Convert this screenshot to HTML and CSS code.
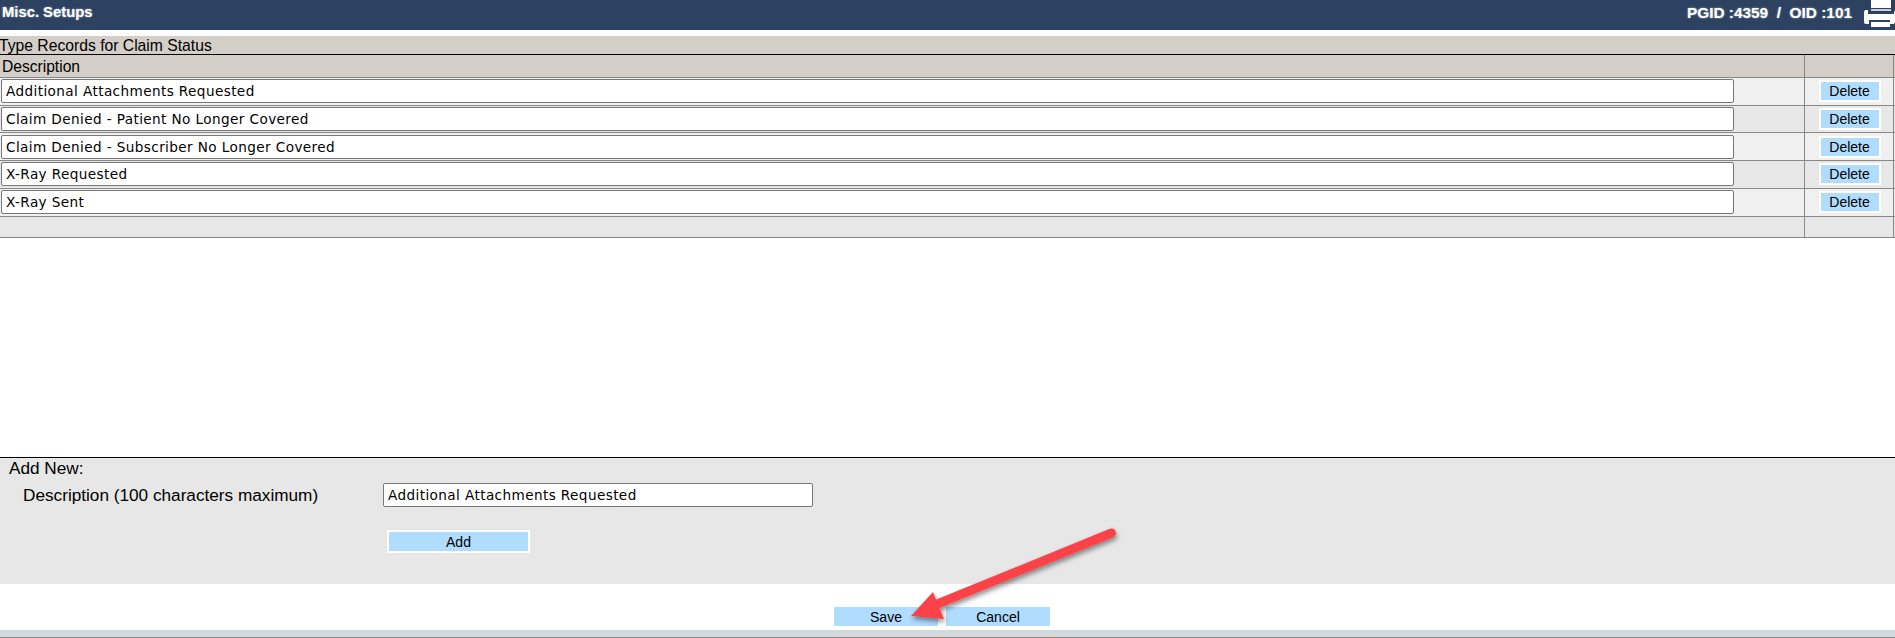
FILE: index.html
```html
<!DOCTYPE html>
<html lang="en">
<head>
    <meta charset="UTF-8">
    <title>Misc. Setups</title>
    <link rel="stylesheet" href="styles.css">
</head>
<body>
    <div class="page">
        <div class="topbar">
            <span class="topbar-title">Misc. Setups</span>
            <div class="topbar-right">
                <span class="topbar-ids">PGID :4359 &nbsp;/&nbsp; OID :101</span>
                <svg class="printer" viewBox="0 0 31 27" width="31" height="27">
                    <path fill="#fff" d="M7 0h20v8H7z"/>
                    <path fill="#fff" d="M2 10h2v4h26V11l1 1v10a2 2 0 0 1-2 2h-3v-4H5v4H2a2 2 0 0 1-2-2V12a2 2 0 0 1 2-2z"/>
                    <path fill="#fff" d="M7 9h20v2H7z" opacity="0.75"/>
                    <path fill="#fff" d="M7 22h19v5H7z"/>
                </svg>
            </div>
        </div>

        <div class="section-title">Type Records for Claim Status</div>

        <div class="records">
            <div class="row row-head">
                <div class="cell-main">Description</div>
                <div class="cell-side"></div>
            </div>
            <div class="row row-odd">
                <div class="cell-main"><input class="text-input" value="Additional Attachments Requested"></div>
                <div class="cell-side"><button class="btn btn-delete">Delete</button></div>
            </div>
            <div class="row row-even row-short">
                <div class="cell-main"><input class="text-input" value="Claim Denied - Patient No Longer Covered"></div>
                <div class="cell-side"><button class="btn btn-delete">Delete</button></div>
            </div>
            <div class="row row-odd row-low">
                <div class="cell-main"><input class="text-input" value="Claim Denied - Subscriber No Longer Covered"></div>
                <div class="cell-side"><button class="btn btn-delete">Delete</button></div>
            </div>
            <div class="row row-even">
                <div class="cell-main"><input class="text-input" value="X-Ray Requested"></div>
                <div class="cell-side"><button class="btn btn-delete">Delete</button></div>
            </div>
            <div class="row row-odd">
                <div class="cell-main"><input class="text-input" value="X-Ray Sent"></div>
                <div class="cell-side"><button class="btn btn-delete">Delete</button></div>
            </div>
            <div class="row row-even row-blank">
                <div class="cell-main"></div>
                <div class="cell-side"></div>
            </div>
        </div>

        <div class="spacer"></div>

        <div class="add-new">
            <div class="add-title">Add New:</div>
            <div class="add-line">
                <label class="add-label">Description (100 characters maximum)</label>
                <input class="text-input add-input" value="Additional Attachments Requested">
            </div>
            <button class="btn btn-add">Add</button>
        </div>

        <div class="actions">
            <button class="btn btn-action">Save</button>
            <button class="btn btn-action">Cancel</button>
        </div>
        <div class="footer"></div>
    </div>

    <!-- annotation arrow drawn over the page -->
    <svg class="arrow" viewBox="0 0 1895 638" width="1895" height="638">
        <defs>
            <filter id="arrowShadow" x="-10%" y="-10%" width="120%" height="130%">
                <feDropShadow dx="1" dy="3" stdDeviation="2.5" flood-color="#000" flood-opacity="0.45"/>
            </filter>
        </defs>
        <g filter="url(#arrowShadow)">
            <path d="M1111.5 533L930 607" stroke="#fb4349" stroke-width="9" stroke-linecap="round" fill="none"/>
            <path fill="#fb4349" d="M911 616L933 592L944 619Z"/>
        </g>
    </svg>
</body>
</html>
```
FILE: styles.css
```css
html, body {
    margin: 0;
    padding: 0;
    background: white;
}
body {
    font-family: "Liberation Sans", Arial, sans-serif;
    overflow: hidden;
}
.page {
    width: 1895px;
    height: 638px;
    display: flex;
    flex-direction: column;
}
.topbar {
    height: 30px;
    background: #2c4260;
    color: white;
    display: flex;
    justify-content: space-between;
    padding-left: 2px;
    flex: none;
    box-sizing: border-box;
    overflow: hidden;
}
.topbar-title,
.topbar-ids {
    font-size: 14.8px;
    font-weight: bold;
    line-height: 25px;
    text-shadow: 0 0 2px rgba(255,255,255,0.6);
}
.topbar-ids {
    font-size: 15.4px;
}
.topbar-right {
    display: flex;
    gap: 12px;
}
.printer {
    display: block;
}
.section-title {
    margin-top: 6px;
    height: 18px;
    background: #d3cec7;
    font-size: 15.7px;
    line-height: 19px;
    text-indent: -1px;
    color: black;
    flex: none;
}
.records {
    border-top: 1px solid black;
    flex: none;
}
.row {
    display: flex;
    border-bottom: 1px solid #888;
    box-sizing: border-box;
    height: 28px;
}
.row-head {
    height: 23px;
    background: #d3cec7;
    font-size: 15.6px;
    line-height: 23px;
}
.row-short {
    height: 27px;
}
.row-low .cell-main,
.row-low .cell-side {
    padding-top: 1px;
}
.row-blank {
    height: 21px;
}
.row-odd {
    background: #f0f0f0;
}
.row-even {
    background: #e7e7e7;
}
.cell-main {
    flex: 1;
    padding-left: 1px;
}
.row-head .cell-main {
    padding-left: 2px;
}
.cell-side {
    width: 90px;
    margin-right: 1px;
    border-left: 1px solid #888;
    border-right: 1px solid #888;
    box-sizing: border-box;
    display: flex;
    justify-content: center;
}
.text-input {
    display: block;
    box-sizing: border-box;
    width: 1733px;
    height: 24px;
    margin: 1px 0 0 0;
    padding: 0 4px;
    border: 1px solid #777;
    border-radius: 2px;
    background: white;
    font-family: "DejaVu Sans", Verdana, sans-serif;
    font-size: 13.6px;
    letter-spacing: 0.4px;
    color: black;
    outline: none;
}
.btn {
    box-sizing: border-box;
    border: 2px solid white;
    background: #b0dcfe;
    color: black;
    font-family: "Liberation Sans", Arial, sans-serif;
    font-size: 14px;
    padding: 0;
    margin: 0;
}
.btn-delete {
    width: 62px;
    height: 22px;
    margin-top: 2px;
    margin-left: 1px;
}
.spacer {
    flex: 1;
}
.add-new {
    flex: none;
    height: 127px;
    border-top: 1px solid black;
    background: #e7e7e7;
    box-sizing: border-box;
    padding-left: 9px;
}
.add-title {
    font-size: 17.2px;
    line-height: 19px;
    margin-top: 1px;
}
.add-line {
    display: flex;
    margin-top: 5px;
    padding-left: 14px;
}
.add-label {
    width: 360px;
    font-size: 17.2px;
    line-height: 24px;
}
.add-input {
    width: 430px;
    margin: 0;
}
.btn-add {
    display: block;
    width: 143px;
    height: 23px;
    margin: 23px 0 0 378px;
}
.actions {
    flex: none;
    height: 46px;
    display: flex;
    justify-content: center;
    gap: 4px;
    padding-top: 21px;
    padding-right: 11px;
    box-sizing: border-box;
}
.btn-action {
    width: 108px;
    height: 23px;
}
.footer {
    flex: none;
    height: 8px;
    background: #d3d8dc;
    border-bottom: 1px solid #888;
    box-sizing: border-box;
}
.arrow {
    position: absolute;
    left: 0;
    top: 0;
    pointer-events: none;
}
```
